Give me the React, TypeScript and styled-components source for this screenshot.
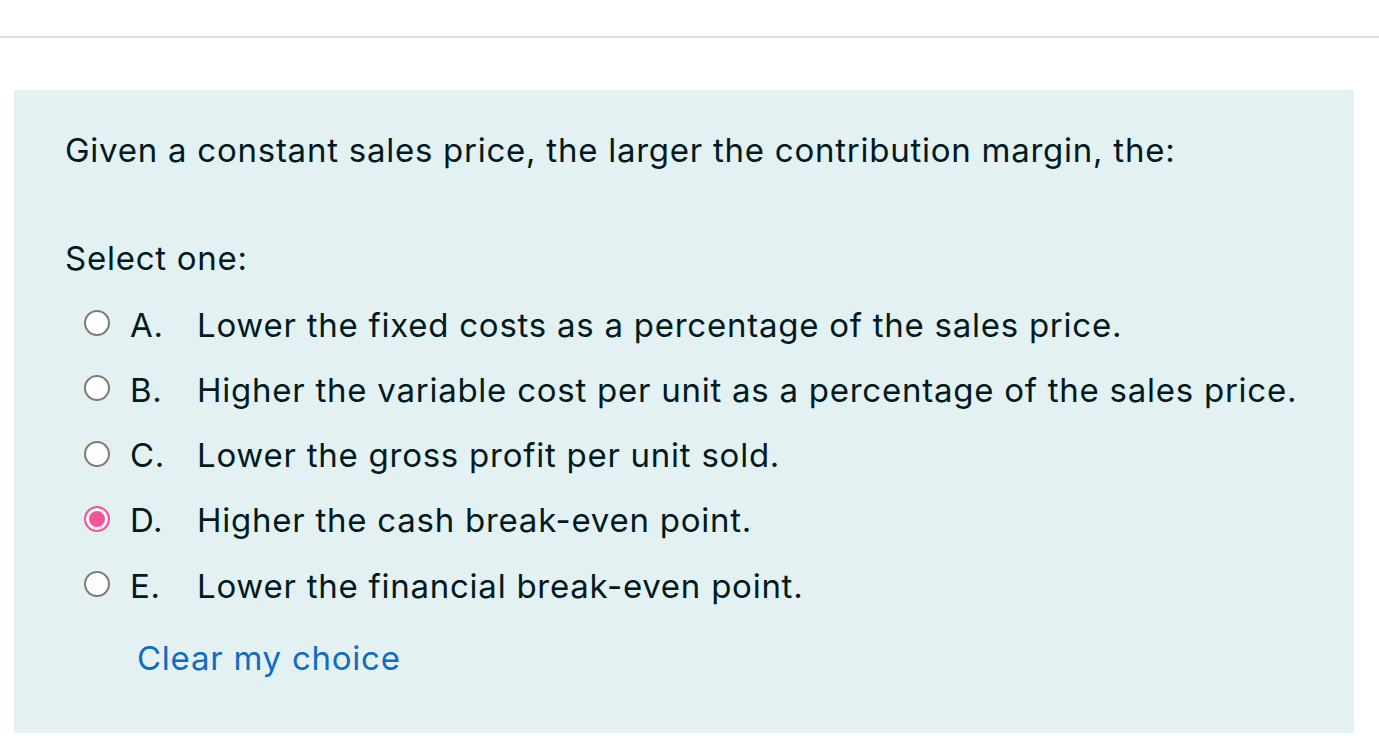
import styled, { createGlobalStyle } from "styled-components";

const GlobalStyle = createGlobalStyle`
  body {
    margin: 0;
    background: #ffffff;
    font-family: Inter, "Liberation Sans", Arial, sans-serif;
    letter-spacing: 0.75px;
    color: #001a1e;
  }
`;

interface Answer {
  letter: string;
  text: string;
}

const answers: Answer[] = [
  { letter: "A.", text: "Lower the fixed costs as a percentage of the sales price." },
  { letter: "B.", text: "Higher the variable cost per unit as a percentage of the sales price." },
  { letter: "C.", text: "Lower the gross profit per unit sold." },
  { letter: "D.", text: "Higher the cash break-even point." },
  { letter: "E.", text: "Lower the financial break-even point." },
];

const selected = "D.";

export default function App() {
  return (
    <>
      <GlobalStyle />
      <TopBar />
      <QuestionPanel>
        <QuestionText>
          Given a constant sales price, the larger the contribution margin, the:
        </QuestionText>
        <Prompt>Select one:</Prompt>
        <AnswerList>
          {answers.map((a) => (
            <AnswerRow key={a.letter}>
              <Radio $checked={a.letter === selected} />
              <Letter>{a.letter}</Letter>
              <AnswerText>{a.text}</AnswerText>
            </AnswerRow>
          ))}
        </AnswerList>
        <ClearLink href="#">Clear my choice</ClearLink>
      </QuestionPanel>
    </>
  );
}

const TopBar = styled.div`
  height: 36px;
  border-bottom: 2px solid #dedede;
`;

const QuestionPanel = styled.div`
  margin: 52px 0 0 14px;
  width: 1340px;
  height: 643px;
  box-sizing: border-box;
  padding: 35px 51px 0 51px;
  background: #e4f1f3;
`;

const QuestionText = styled.div`
  font-size: 33px;
  line-height: 50px;
`;

const Prompt = styled.div`
  margin-top: 58px;
  font-size: 33px;
  line-height: 50px;
`;

const AnswerList = styled.div`
  margin-top: 9px;
  display: flex;
  flex-direction: column;
`;

const AnswerRow = styled.label`
  display: flex;
  align-items: center;
  height: 65.25px;
  font-size: 33px;
  padding-left: 19px;
`;

const Radio = styled.span<{ $checked: boolean }>`
  width: 26px;
  height: 26px;
  box-sizing: border-box;
  border-radius: 50%;
  flex-shrink: 0;
  margin-top: -3px;
  background: ${(p) => (p.$checked ? "#f3559a" : "#ffffff")};
  border: 2px solid ${(p) => (p.$checked ? "#f3559a" : "#7b7b7b")};
  box-shadow: ${(p) => (p.$checked ? "inset 0 0 0 3px #ffffff" : "none")};
`;

const Letter = styled.span`
  width: 67px;
  margin-left: 20px;
  flex-shrink: 0;
`;

const AnswerText = styled.span`
  white-space: nowrap;
`;

const ClearLink = styled.a`
  display: block;
  margin: 15px 0 0 72px;
  font-size: 33px;
  line-height: 50px;
  color: #0f6cbf;
  text-decoration: none;
`;
